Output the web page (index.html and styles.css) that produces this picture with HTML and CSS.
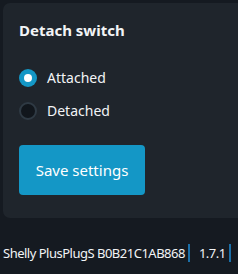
FILE: index.html
```html
<!DOCTYPE html>
<html lang="en">
<head>
    <meta charset="UTF-8">
    <meta name="viewport" content="width=device-width, initial-scale=1.0">
    <title>Detach switch</title>
    <link rel="stylesheet" href="styles.css">
</head>
<body>
    <div class="card">
        <h3 class="card-title">Detach switch</h3>
        <label class="radio-row">
            <input type="radio" name="detach" checked>
            <span class="radio-dot"></span>
            <span>Attached</span>
        </label>
        <label class="radio-row">
            <input type="radio" name="detach">
            <span class="radio-dot"></span>
            <span>Detached</span>
        </label>
        <button class="save-btn">Save settings</button>
    </div>

    <div class="footer">
        <span class="footer-item">Shelly PlusPlugS B0B21C1AB868</span>
        <span class="footer-item">1.7.1</span>
    </div>
</body>
</html>
```

FILE: styles.css
```css
body {
    margin: 0;
    padding: 3px 0 0 3px;
    background-color: #151a21;
    color: #f2f4f6;
    font-family: "Noto Sans", "Open Sans", sans-serif;
    overflow: hidden;
}
.card {
    background: #1f252c;
    border-radius: 7px;
    padding: 17px 16px 23px 16px;
    margin-right: -10px;
}
.card-title {
    margin: 0 0 21px 0;
    font-size: 15px;
    font-weight: bold;
    line-height: 20px;
}
.radio-row {
    display: flex;
    align-items: center;
    gap: 10px;
    height: 33px;
    font-size: 14px;
}
.radio-row input {
    display: none;
}
.radio-dot {
    box-sizing: border-box;
    width: 18px;
    height: 18px;
    border-radius: 50%;
    border: 2px solid #2f3a44;
    background: #11161c;
    position: relative;
}
.radio-row input:checked + .radio-dot {
    border: none;
    background: #1497c6;
}
.radio-row input:checked + .radio-dot::after {
    content: "";
    position: absolute;
    left: 5px;
    top: 5px;
    width: 8px;
    height: 8px;
    border-radius: 50%;
    background: white;
}
.save-btn {
    display: block;
    margin-top: 18px;
    width: 126px;
    height: 50px;
    border: none;
    border-radius: 4px;
    background-color: #1497c6;
    color: white;
    font-family: inherit;
    font-size: 15px;
    padding: 0;
}
.footer {
    margin-top: 26px;
    display: flex;
    white-space: nowrap;
    font-size: 13px;
    letter-spacing: -0.5px;
    line-height: 18px;
}
.footer-item {
    padding-right: 3px;
    margin-right: 9px;
    border-right: 2px solid #1b6fa8;
}
```
